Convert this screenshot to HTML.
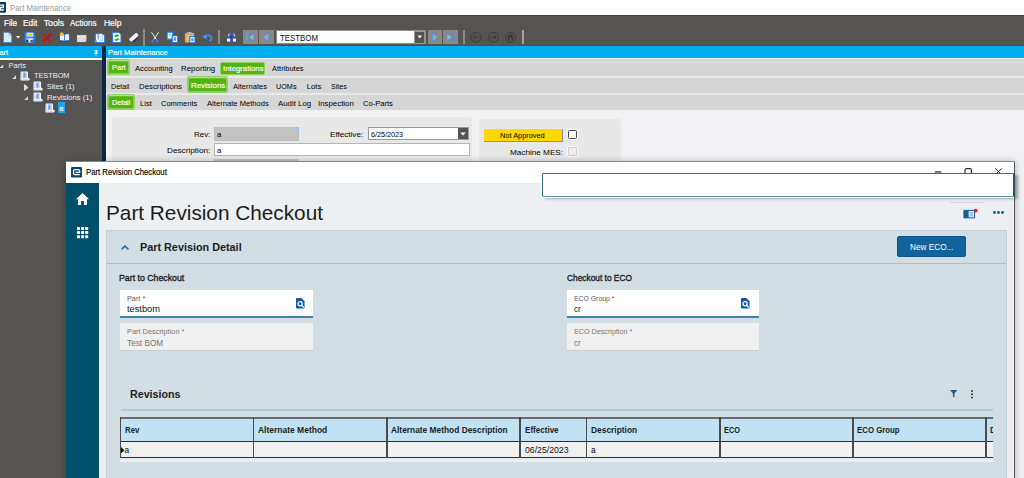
<!DOCTYPE html>
<html><head><meta charset="utf-8">
<style>
*{box-sizing:border-box;margin:0;padding:0}
html,body{width:1024px;height:478px;overflow:hidden;background:#f2f2f4;font-family:"Liberation Sans",sans-serif}
#root{position:relative;width:1024px;height:478px;overflow:hidden}
.a{position:absolute}
.t{position:absolute;white-space:nowrap;line-height:1}
svg{position:absolute;overflow:visible}
.gt{position:absolute;background:#52b414;border:1px solid #93d168;border-radius:2.2px;box-shadow:inset 0 0 0 .5px #bfe6a2,inset 0 1.2px 0 0 #a6da80}
.nb{position:absolute;background:#8b8987;top:30px;height:14.4px}
.sep{position:absolute;background:#8d8b89;width:2.2px;top:30px;height:14px}
.fld{position:absolute;height:27.5px;width:193px}
</style></head><body><div id="root">

<!-- ===== main window chrome ===== -->
<div class="a" style="left:0;top:0;width:1024px;height:15px;background:#fff"></div>
<svg style="left:0;top:2px" width="7" height="11" viewBox="0 0 7 11"><rect x="-5" y="0" width="11" height="10.8" rx="1" fill="#0b3c5d"/><path d="M-2 3.1H3.4V5.5H-2M0.3 5.5V8H3.8" stroke="#fff" stroke-width="1.3" fill="none"/></svg>
<div class="a" style="left:0;top:15px;width:1024px;height:31px;background:#565452"></div>
<div class="a" style="left:0;top:15px;width:1024px;height:1px;background:#424140"></div>
<div class="a" style="left:0;top:45px;width:1024px;height:1px;background:#5a4d49"></div>

<div class="nb" style="left:242.9px;width:14.9px"></div>
<div class="nb" style="left:259px;width:14.8px"></div>
<div class="nb" style="left:427.5px;width:14.4px"></div>
<div class="nb" style="left:443.4px;width:14.6px"></div>
<div class="sep" style="left:143px;top:28.5px;height:17px"></div>
<div class="sep" style="left:218.2px;top:29.8px;height:14.4px"></div>
<div class="sep" style="left:462.8px"></div>
<div class="sep" style="left:522px;background:#a3a1a0"></div>
<div class="a" style="left:275.9px;top:30px;width:150px;height:14.3px;background:#fff;border:1px solid #8e8c8a"></div>
<div class="a" style="left:414px;top:30.7px;width:11.3px;height:13.1px;background:#555352;border:1px solid #9a9896"></div>
<svg style="left:0;top:26px" width="530" height="22" viewBox="0 26 530 22">
<!-- new doc -->
<path d="M3.4 32.2H9.2L11.8 34.8V42.6H3.4Z" fill="#d9ecfb" stroke="#2a7fe0" stroke-width="0.9"/><path d="M9.2 32.2V34.8H11.8Z" fill="#fff" stroke="#3b4a60" stroke-width=".5"/>
<path d="M16 36H20.2L18.1 38.4Z" fill="#fff"/>
<!-- save -->
<rect x="24.6" y="32.2" width="10.6" height="10.6" rx=".8" fill="#2f8df2" stroke="#1f5fc0" stroke-width=".7"/>
<rect x="26.6" y="32.6" width="6.6" height="4" fill="#c7e2fb"/><rect x="27.2" y="33.4" width="5.4" height="2.4" fill="#f3cf2c"/>
<rect x="26.4" y="38.4" width="7" height="4.2" fill="#e8f1fb"/><rect x="26.2" y="39.6" width="2.2" height="3" fill="#11308a"/><rect x="30.4" y="40" width="1.8" height="2.6" fill="#555"/><rect x="32.4" y="39.6" width="1.4" height="3" fill="#11308a"/>
<!-- delete X -->
<path d="M43 34.4L51.2 42" stroke="#f00000" stroke-width="1.5"/><path d="M51.3 33.5L42.9 42.2" stroke="#f00000" stroke-width="2"/>
<!-- book -->
<path d="M59.4 34.2Q62 32.6 64.5 34.2Q67 32.6 69.7 34.2V41.6Q67 40.4 64.5 41.8Q62 40.4 59.4 41.6Z" fill="#e9f3fc" stroke="#1c62c4" stroke-width="1.1"/>
<path d="M64.5 34.2V41.6" stroke="#1c62c4" stroke-width=".8"/><path d="M59.2 40.6Q62 39.6 64.5 41Q67 39.6 69.8 40.6V42.2Q67 41 64.5 42.4Q62 41 59.2 42.2Z" fill="#1552b8"/>
<circle cx="61.8" cy="34.2" r="1.9" fill="#f8b40e"/><circle cx="61.4" cy="33.8" r=".8" fill="#fde37a"/>
<!-- gray note -->
<path d="M76.6 34.8H86.8V40.8L85 42.6H76.6Z" fill="#dcdcdc" stroke="#454342" stroke-width=".7"/><path d="M77.2 35.4H86.2V37.4H77.2Z" fill="#ebebeb"/>
<!-- attach doc -->
<path d="M95 33.6H101.8L104.6 35.6V42.6H95Z" fill="#fff" stroke="#2a78d6" stroke-width="1"/><path d="M98.2 39.6V34Q98.2 32.4 96.9 32.4Q95.6 32.4 95.6 34V40Q95.6 41.4 96.9 41.4" stroke="#3457b8" stroke-width=".8" fill="none"/><path d="M99.6 36H102.6V41H99.6" stroke="#9dbce8" stroke-width=".7" fill="#e6eefb"/>
<!-- refresh -->
<path d="M112.5 32.4H118.8L121 34.4V42.6H112.5Z" fill="#f2f8fd" stroke="#2a78d6" stroke-width="1"/>
<path d="M114.4 37Q114.6 34.6 117 34.8L116.8 33.8L119.2 35.6L116.8 37V36.2Q115.8 36.2 115.8 37Z" fill="#23a018"/>
<path d="M119.2 38.2Q119 40.8 116.6 40.6L116.8 41.6L114.4 39.8L116.8 38.4V39.2Q117.8 39.2 117.8 38.2Z" fill="#23a018"/>
<!-- eraser -->
<path d="M129.5 38.2L135.4 33Q136.4 32.2 137.4 33.2L138.4 34.6Q139 35.6 138 36.4L132.2 41.4Q131.2 42.2 130.2 41.2L129.2 39.8Q128.6 39 129.5 38.2Z" fill="#f4f4f8" stroke="#43425a" stroke-width=".5"/><path d="M132.6 41.8L138.4 36.8L138.7 37.5L134.4 41.9Z" fill="#28286a"/>
<!-- scissors -->
<path d="M151.5 32.3L156.2 39.4M158.5 32.3L153.8 39.4" stroke="#f4f4f4" stroke-width="0.95"/>
<circle cx="152.7" cy="41.2" r="1.5" fill="#2f7fe6"/><circle cx="157.3" cy="41.2" r="1.5" fill="#2f7fe6"/><circle cx="152.7" cy="41.2" r=".45" fill="#565452"/><circle cx="157.3" cy="41.2" r=".45" fill="#565452"/>
<!-- copy -->
<rect x="167.2" y="32.3" width="5.6" height="6.8" fill="#fff" stroke="#1e8cf4" stroke-width="1.1"/><rect x="168.6" y="33.6" width="2" height="2.6" fill="#8fc0f4"/>
<rect x="172.2" y="35.6" width="5.6" height="7" fill="#fff" stroke="#1a74dc" stroke-width="1.2"/><rect x="173.6" y="37.2" width="2.6" height="3.6" fill="#5a98e6"/>
<!-- paste -->
<rect x="185" y="33" width="9" height="9.6" rx=".8" fill="#e6ad72" stroke="#b8773a" stroke-width=".6"/><rect x="187.4" y="32" width="4.2" height="2" rx=".6" fill="#c9c9c9" stroke="#777" stroke-width=".4"/><path d="M186.4 35.6H190M186.4 37.4H190M186.4 39.2H189" stroke="#f4cfa2" stroke-width=".7"/>
<rect x="189.8" y="36.6" width="5.2" height="6.2" fill="#fff" stroke="#1a74dc" stroke-width="1.1"/><rect x="191.2" y="38.2" width="2.4" height="3" fill="#5a98e6"/>
<!-- undo -->
<path d="M205.4 37.2Q208.6 33.6 211 36.4Q212.6 38.8 209.6 41.4" stroke="#3b86ea" stroke-width="1.9" fill="none"/><path d="M202 36.2L206.8 34.2L206.4 39.4Z" fill="#4a94f2"/>
<!-- binoculars -->
<path d="M227.6 36L229 32.8H230.6L231 36V41.4Q231 42.2 230 42.2H227.4Q226.4 42.2 226.4 41.4V38.4Z" fill="#3c58b4"/><path d="M235.4 36L234 32.8H232.4L232 36V41.4Q232 42.2 233 42.2H235.6Q236.6 42.2 236.6 41.4V38.4Z" fill="#3c58b4"/>
<rect x="227" y="38.6" width="3.2" height="3" fill="#f2f6ff"/><rect x="233" y="38.6" width="3" height="3" fill="#f2f6ff"/><path d="M229.2 33.4L228.4 36.4M233.8 33.4L234.6 36.4" stroke="#dfe8ff" stroke-width=".9"/><rect x="230.4" y="36.4" width="2.2" height="1.6" fill="#1a2a80"/>
<!-- nav first / prev / next / last -->
<rect x="246" y="33.2" width="2.2" height="8" fill="#5fa3dd"/><path d="M254 33L248.8 37.2L254 41.4Z" fill="#8ab6dc" stroke="#4a7fd0" stroke-width=".6"/>
<path d="M268.8 32.8L263 37.2L268.8 41.8Z" fill="#7fb0dc" stroke="#4a7fd0" stroke-width=".6"/>
<path d="M432.2 32.8L438 37.2L432.2 41.8Z" fill="#7fb0dc" stroke="#4a7fd0" stroke-width=".6"/>
<path d="M446.8 33L452 37.2L446.8 41.4Z" fill="#8ab6dc" stroke="#4a7fd0" stroke-width=".6"/><rect x="452.6" y="33.2" width="2.2" height="8" fill="#5f86dd"/>
<!-- combo arrow -->
<path d="M417.6 35.6H422L419.8 38.6Z" fill="#fff"/>
<!-- circles -->
<g stroke="#3b3938" fill="none" stroke-width=".9"><circle cx="476" cy="37.2" r="4.9"/><circle cx="493.4" cy="37.2" r="4.9"/><circle cx="510.5" cy="37.2" r="4.9"/>
<path d="M479 37.2H473.4M475.4 35.2L473.2 37.2L475.4 39.2" stroke-width="1"/><path d="M490.4 37.2H496M494 35.2L496.2 37.2L494 39.2" stroke-width="1"/></g>
<path d="M510.5 33.8L513.2 36V40H507.8V36Z" fill="#3b3938"/><rect x="509.8" y="37.6" width="1.4" height="2.4" fill="#565f66"/>
</svg>

<div class="a" style="left:0;top:46px;width:1024px;height:12px;background:#00adee"></div>
<!-- pin -->
<svg style="left:93px;top:50px" width="6" height="6" viewBox="0 0 6 6"><path d="M1.6 0.4H4.4M2.1 0.4V3.1M3.9 0.4V3.1M0.9 3.3H5.1M3 3.3V5.9" stroke="#fff" stroke-width="0.7" fill="none"/><rect x="3.2" y="0.6" width=".8" height="2.6" fill="#fff"/></svg>
<!-- left tree -->
<div class="a" style="left:0;top:58px;width:102.4px;height:420px;background:#565452"></div>
<div class="a" style="left:0;top:58px;width:102.4px;height:1.8px;background:#fff"></div>
<div class="a" style="left:102.4px;top:46px;width:3.6px;height:120px;background:#0a2744"></div>
<svg style="left:0;top:64px" width="3.4" height="4.2" viewBox="0 0 3.4 4.2"><path d="M3.2 0.4V4H-0.4Z" fill="#d9d9e2"/></svg><svg style="left:12px;top:74.6px" width="4.2" height="4.2" viewBox="0 0 4.2 4.2"><path d="M4 0.2V4H0.2Z" fill="#d9d9e2"/></svg><svg style="left:23.8px;top:83.6px" width="4.6" height="7" viewBox="0 0 4.6 7"><path d="M0.5 0.6L4 3.5L0.5 6.4Z" fill="#cfcfd6" stroke="#f4f4f8" stroke-width=".8"/></svg><svg style="left:24.2px;top:96.2px" width="4.2" height="4.2" viewBox="0 0 4.2 4.2"><path d="M4 0.2V4H0.2Z" fill="#d9d9e2"/></svg><svg style="left:20.0px;top:70.7px" width="10" height="10" viewBox="0 0 10 10"><path d="M0.6 1.2Q0.6 0.4 1.4 0.4H7.2Q8 0.4 8 1.2V6.4Q9.8 6.8 9.8 8.2Q9.8 9.6 8.2 9.6H1.6Q0.4 9.6 0.4 8.4Z" fill="#f3f6fb"/><rect x="2.8" y="1.2" width="3.8" height="6" fill="#a6c7ec"/><rect x="3.7" y="2.4" width="1.1" height="3.8" fill="#5d8ed2"/><path d="M1.4 1.6V7.6" stroke="#b8c6d8" stroke-width=".7"/><path d="M1.2 8.6H8.6" stroke="#c6d2e2" stroke-width=".8"/></svg><svg style="left:32.9px;top:81.4px" width="10" height="10" viewBox="0 0 10 10"><path d="M0.6 1.2Q0.6 0.4 1.4 0.4H7.2Q8 0.4 8 1.2V6.4Q9.8 6.8 9.8 8.2Q9.8 9.6 8.2 9.6H1.6Q0.4 9.6 0.4 8.4Z" fill="#f3f6fb"/><rect x="2.8" y="1.2" width="3.8" height="6" fill="#a6c7ec"/><rect x="3.7" y="2.4" width="1.1" height="3.8" fill="#5d8ed2"/><path d="M1.4 1.6V7.6" stroke="#b8c6d8" stroke-width=".7"/><path d="M1.2 8.6H8.6" stroke="#c6d2e2" stroke-width=".8"/></svg><svg style="left:32.9px;top:92.2px" width="10" height="10" viewBox="0 0 10 10"><path d="M0.6 1.2Q0.6 0.4 1.4 0.4H7.2Q8 0.4 8 1.2V6.4Q9.8 6.8 9.8 8.2Q9.8 9.6 8.2 9.6H1.6Q0.4 9.6 0.4 8.4Z" fill="#f3f6fb"/><rect x="2.8" y="1.2" width="3.8" height="6" fill="#a6c7ec"/><rect x="3.7" y="2.4" width="1.1" height="3.8" fill="#5d8ed2"/><path d="M1.4 1.6V7.6" stroke="#b8c6d8" stroke-width=".7"/><path d="M1.2 8.6H8.6" stroke="#c6d2e2" stroke-width=".8"/></svg><svg style="left:45.3px;top:102.8px" width="10" height="10" viewBox="0 0 10 10"><path d="M0.6 1.2Q0.6 0.4 1.4 0.4H7.2Q8 0.4 8 1.2V6.4Q9.8 6.8 9.8 8.2Q9.8 9.6 8.2 9.6H1.6Q0.4 9.6 0.4 8.4Z" fill="#f3f6fb"/><rect x="2.8" y="1.2" width="3.8" height="6" fill="#a6c7ec"/><rect x="3.7" y="2.4" width="1.1" height="3.8" fill="#5d8ed2"/><path d="M1.4 1.6V7.6" stroke="#b8c6d8" stroke-width=".7"/><path d="M1.2 8.6H8.6" stroke="#c6d2e2" stroke-width=".8"/></svg><div class="a" style="left:58px;top:102.4px;width:6.6px;height:10.4px;background:#1ea5ee"></div>
<!-- tabs -->
<div class="a" style="left:106px;top:58px;width:918px;height:52px;background:#d6d6d6"></div>
<div class="a" style="left:106px;top:58px;width:918px;height:1px;background:#f4f4f4"></div>
<div class="a" style="left:106px;top:75.6px;width:918px;height:2px;background:#e9e9e9"></div>
<div class="a" style="left:106px;top:92.6px;width:918px;height:2px;background:#e9e9e9"></div>
<div class="a" style="left:106px;top:110px;width:2px;height:60px;background:#f9f9fa"></div>
<div class="gt" style="left:107.3px;top:59.1px;width:22.3px;height:16px"></div>
<div class="gt" style="left:220.2px;top:61.5px;width:45.2px;height:13px;box-shadow:none;border-color:#8fd060"></div>
<div class="gt" style="left:186.9px;top:76px;width:41px;height:16.9px"></div>
<div class="gt" style="left:107.3px;top:93.6px;width:27.4px;height:16.3px"></div>
<!-- form groups -->
<div class="a" style="left:112px;top:117px;width:360.4px;height:50px;background:#e8e8e8;border-radius:3px 3px 0 0"></div>
<div class="a" style="left:479px;top:119px;width:142.2px;height:48px;background:#e8e8e8;border-radius:3px 3px 0 0"></div>
<div class="a" style="left:214px;top:127px;width:85px;height:13.6px;background:#c3c3c3;border:1px solid #bdbdbd"></div>
<svg style="left:293px;top:127px" width="6" height="6" viewBox="0 0 6 6"><path d="M0 0H6V6Z" fill="#9cc6ea"/></svg>
<div class="a" style="left:214px;top:143.2px;width:255.6px;height:13.2px;background:#fff;border:1px solid #b4b4b4"></div>
<div class="a" style="left:214px;top:158.8px;width:85px;height:8px;background:#c3c3c3"></div>
<div class="a" style="left:368px;top:127px;width:101px;height:12.8px;background:#fff;border:1px solid #9a9a9a"></div>
<div class="a" style="left:458px;top:127.6px;width:10.4px;height:11.6px;background:#555352"></div>
<svg style="left:460.4px;top:131.5px" width="6" height="4" viewBox="0 0 6 4"><path d="M0.3 0.5H5.7L3 3.6Z" fill="#fff"/></svg>
<div class="a" style="left:484px;top:129px;width:78.8px;height:12.9px;background:#ffd800;border-right:1px solid #8d8da3;border-bottom:1.4px solid #8d8da3"></div>
<div class="a" style="left:568.1px;top:130px;width:9.4px;height:8.8px;background:#fff;border:1.1px solid #4a4a4a;border-radius:1.5px;box-shadow:0 0 0 1px #f4f4f4"></div>
<div class="a" style="left:568.1px;top:147.1px;width:9.4px;height:8.6px;background:#ececec;border:1px solid #cfcfcf;border-radius:1px;box-shadow:0 0 0 1px #f6f6f6"></div>

<!-- ===== dialog ===== -->
<div class="a" style="left:66px;top:162.2px;width:949px;height:320px;background:#ecf0f3;box-shadow:0 0 7px 0 rgba(0,0,0,.3)"></div>
<div class="a" style="left:66px;top:161.2px;width:949px;height:1.3px;background:#858585"></div>
<div class="a" style="left:1014px;top:162px;width:1px;height:320px;background:#5a5a5a"></div>
<div class="a" style="left:66px;top:162.4px;width:948px;height:20.2px;background:#fff"></div>
<!-- dialog icon -->
<svg style="left:71px;top:166.7px" width="11" height="10.4" viewBox="0 0 11 10.4"><rect width="11" height="10.4" rx="1.2" fill="#0b4666"/><path d="M4.4 5.4H8.7V4.1Q8.7 2.7 7.3 2.7H3.9Q2.5 2.7 2.5 4.1V6.3Q2.5 7.7 3.9 7.7H8.8" stroke="#fff" stroke-width="1.2" fill="none"/></svg>
<!-- window buttons -->
<svg style="left:930px;top:164px" width="80" height="10" viewBox="0 0 80 10"><path d="M4.8 7.9H11.4" stroke="#3a3a3a" stroke-width="1.3"/><rect x="35" y="4.7" width="6.4" height="7" rx="1.3" fill="none" stroke="#333" stroke-width="1.2"/><path d="M65.2 4.3L71.8 10.9M71.8 4.3L65.2 10.9" stroke="#222" stroke-width="1"/></svg>
<!-- nav -->
<div class="a" style="left:66px;top:182.6px;width:32.8px;height:300px;background:#00506c"></div>
<div class="a" style="left:98.8px;top:182.6px;width:1.2px;height:300px;background:#f6f8fa"></div>
<svg style="left:76px;top:193px" width="13" height="12" viewBox="0 0 13 12"><path d="M6.5 0L13 6.2H11V12H7.9V8H5.1V12H2V6.2H0Z" fill="#fff"/></svg>
<svg style="left:77px;top:227px" width="11.2" height="11.2" viewBox="0 0 11.2 11.2" fill="#fff"><rect x="0" y="0" width="3" height="3" rx=".4"/><rect x="4.1" y="0" width="3" height="3" rx=".4"/><rect x="8.2" y="0" width="3" height="3" rx=".4"/><rect x="0" y="4.1" width="3" height="3" rx=".4"/><rect x="4.1" y="4.1" width="3" height="3" rx=".4"/><rect x="8.2" y="4.1" width="3" height="3" rx=".4"/><rect x="0" y="8.2" width="3" height="3" rx=".4"/><rect x="4.1" y="8.2" width="3" height="3" rx=".4"/><rect x="8.2" y="8.2" width="3" height="3" rx=".4"/></svg>
<!-- tooltip box -->
<div class="a" style="left:542.3px;top:173px;width:472.7px;height:24px;background:#fff;border:1.2px solid #33727e;border-bottom:1.9px solid #6199a1;border-right:2px solid #28525d;border-radius:1.5px 0 0 1.5px;box-shadow:-1px 1px 0 0 #fff,3px 2px 3px rgba(0,0,0,.28)"></div>
<!-- top-right icons -->
<div class="a" style="left:949.6px;top:202px;width:34px;height:1px;background:#d2d4d6"></div>
<svg style="left:963.4px;top:209px" width="15" height="10" viewBox="0 0 15 10"><rect x="0" y="0.6" width="12.4" height="9.2" rx="1" fill="#155f9b" stroke="#fff" stroke-width=".7"/><rect x="5.6" y="2" width="5.4" height="6.4" fill="#dfe9f2"/><path d="M6.6 3.6H10M6.6 5.2H10M6.6 6.8H10" stroke="#6d8fb0" stroke-width=".6"/><circle cx="12.7" cy="1.6" r="1.9" fill="#f01818"/></svg>
<svg style="left:992.8px;top:211.4px" width="11" height="3" viewBox="0 0 11 3" fill="#0f5aa5"><circle cx="1.5" cy="1.5" r="1.45"/><circle cx="5.5" cy="1.5" r="1.45"/><circle cx="9.5" cy="1.5" r="1.45"/></svg>
<!-- panel -->
<div class="a" style="left:106px;top:230px;width:901px;height:260px;background:#d2dee3;border:1px solid #c2d2d8"></div>
<div class="a" style="left:107px;top:263px;width:899px;height:1px;background:#9fc4d2"></div>
<svg style="left:121.2px;top:245.4px" width="8" height="5" viewBox="0 0 8 5"><path d="M0.6 4.4L4 1L7.4 4.4" stroke="#1a689d" stroke-width="1.5" fill="none"/></svg>
<div class="a" style="left:897px;top:236px;width:69px;height:20.6px;background:#12639b;border-radius:2px;border:1px solid #0e5688"></div>
<!-- fields -->
<div class="fld" style="left:120px;top:290px;background:#fff;border-bottom:2px solid #3d86b4"></div>
<div class="fld" style="left:120px;top:323.3px;background:#f0f0f0;border-bottom:1.2px solid #c4d0d6"></div>
<div class="fld" style="left:566.5px;top:290px;width:192px;background:#fff;border-bottom:2px solid #3d86b4"></div>
<div class="fld" style="left:566.5px;top:323.3px;width:192px;background:#f0f0f0;border-bottom:1.2px solid #c4d0d6"></div>
<svg style="left:295.7px;top:297.9px" width="8.5" height="10.4" viewBox="0 0 8.5 10.4"><path d="M0 0.8Q0 0 .8 0H5.3L8.5 3.2V9.6Q8.5 10.4 7.7 10.4H.8Q0 10.4 0 9.6Z" fill="#0e58a4"/><circle cx="4.1" cy="5.7" r="2.1" fill="none" stroke="#fff" stroke-width="1.25"/><path d="M5.8 7.5L7.7 9.5" stroke="#fff" stroke-width="1.2"/></svg>
<svg style="left:741px;top:297.9px" width="8.5" height="10.4" viewBox="0 0 8.5 10.4"><path d="M0 0.8Q0 0 .8 0H5.3L8.5 3.2V9.6Q8.5 10.4 7.7 10.4H.8Q0 10.4 0 9.6Z" fill="#0e58a4"/><circle cx="4.1" cy="5.7" r="2.1" fill="none" stroke="#fff" stroke-width="1.25"/><path d="M5.8 7.5L7.7 9.5" stroke="#fff" stroke-width="1.2"/></svg>
<!-- revisions grid -->
<svg style="left:950px;top:390px" width="7.4" height="7.6" viewBox="0 0 7.4 7.6"><path d="M0 0H7.4L4.5 3.6V7.6L2.9 6.4V3.6Z" fill="#17609a"/></svg>
<svg style="left:971px;top:390.4px" width="2" height="8.6" viewBox="0 0 2 8.6" fill="#222"><circle cx="1" cy="1" r=".95"/><circle cx="1" cy="4.3" r=".95"/><circle cx="1" cy="7.6" r=".95"/></svg>
<div class="a" style="left:121px;top:409.2px;width:871.5px;height:1.9px;background:#abccd8"></div>
<div class="a" style="left:120px;top:417px;width:872.5px;height:44.5px;background:#e9eef0;overflow:hidden"><div class="a" style="left:0;top:0.4px;width:880px;height:24.6px;background:#c1e2f5"></div><div class="a" style="left:0;top:25px;width:880px;height:16px;background:#f0f0f0"></div><div class="a" style="left:0;top:0.2px;width:880px;height:1.5px;background:#6a6a6a"></div><div class="a" style="left:0;top:23.8px;width:880px;height:1.4px;background:#2e2e2e"></div><div class="a" style="left:0;top:40.0px;width:880px;height:1.3px;background:#2e2e2e"></div><div class="a" style="left:-0.40px;top:0.4px;width:1.8px;height:40.8px;background:#4a4a4a"></div><div class="a" style="left:132.60px;top:0.4px;width:1.8px;height:40.8px;background:#4a4a4a"></div><div class="a" style="left:265.85px;top:0.4px;width:1.8px;height:40.8px;background:#4a4a4a"></div><div class="a" style="left:399.35px;top:0.4px;width:1.8px;height:40.8px;background:#4a4a4a"></div><div class="a" style="left:465.60px;top:0.4px;width:1.8px;height:40.8px;background:#4a4a4a"></div><div class="a" style="left:599.10px;top:0.4px;width:1.8px;height:40.8px;background:#4a4a4a"></div><div class="a" style="left:732.10px;top:0.4px;width:1.8px;height:40.8px;background:#4a4a4a"></div><div class="a" style="left:865.35px;top:0.4px;width:1.8px;height:40.8px;background:#4a4a4a"></div><svg style="left:1.2px;top:29.6px" width="3.4" height="6.6" viewBox="0 0 3.4 6.6"><path d="M0 0L3.4 3.3L0 6.6Z" fill="#111"/></svg><div class="t" style="left:870px;top:8.97px;font-size:8.3px;font-weight:700;color:#1c1c1c">D</div></div>
<div class="t" style="left:9.90px;top:4.00px;font-size:8.80px;font-weight:400;color:#9a9a9a;transform:scaleX(0.8870);transform-origin:0 0;">Part Maintenance</div>
<div class="t" style="left:3.75px;top:19.00px;font-size:8.70px;font-weight:400;color:#fff;transform:scaleX(0.9393);transform-origin:0 0;-webkit-text-stroke:0.18px #fff;">File</div>
<div class="t" style="left:23.10px;top:19.00px;font-size:8.70px;font-weight:400;color:#fff;transform:scaleX(0.9600);transform-origin:0 0;-webkit-text-stroke:0.18px #fff;">Edit</div>
<div class="t" style="left:43.75px;top:19.00px;font-size:8.70px;font-weight:400;color:#fff;transform:scaleX(1.0000);transform-origin:0 0;-webkit-text-stroke:0.18px #fff;">Tools</div>
<div class="t" style="left:70.00px;top:19.00px;font-size:8.70px;font-weight:400;color:#fff;transform:scaleX(0.9276);transform-origin:0 0;-webkit-text-stroke:0.18px #fff;">Actions</div>
<div class="t" style="left:103.50px;top:19.00px;font-size:8.70px;font-weight:400;color:#fff;transform:scaleX(0.9722);transform-origin:0 0;-webkit-text-stroke:0.18px #fff;">Help</div>
<div class="t" style="left:-5.60px;top:49.00px;font-size:7.50px;font-weight:400;color:#fff;transform:scaleX(1.0286);transform-origin:0 0;-webkit-text-stroke:0.15px #fff;">Part</div>
<div class="t" style="left:107.50px;top:49.00px;font-size:7.50px;font-weight:400;color:#fff;transform:scaleX(1.0172);transform-origin:0 0;-webkit-text-stroke:0.15px #fff;">Part Maintenance</div>
<div class="t" style="left:279.70px;top:34.00px;font-size:8.60px;font-weight:400;color:#111;transform:scaleX(0.9146);transform-origin:0 0;">TESTBOM</div>
<div class="t" style="left:8.50px;top:62.00px;font-size:7.50px;font-weight:400;color:#ececfa;transform:scaleX(1.0000);transform-origin:0 0;">Parts</div>
<div class="t" style="left:34.10px;top:72.00px;font-size:7.50px;font-weight:400;color:#ececfa;transform:scaleX(0.9778);transform-origin:0 0;">TESTBOM</div>
<div class="t" style="left:46.70px;top:83.00px;font-size:7.50px;font-weight:400;color:#ececfa;transform:scaleX(1.0000);transform-origin:0 0;">Sites (1)</div>
<div class="t" style="left:46.70px;top:94.00px;font-size:7.50px;font-weight:400;color:#ececfa;transform:scaleX(1.0341);transform-origin:0 0;">Revisions (1)</div>
<div class="t" style="left:59.30px;top:105.00px;font-size:7.50px;font-weight:400;color:#fff;transform:scaleX(1.0000);transform-origin:0 0;-webkit-text-stroke:0.15px #fff;">a</div>
<div class="t" style="left:111.90px;top:64.00px;font-size:7.70px;font-weight:400;color:#fff;transform:scaleX(0.9714);transform-origin:0 0;-webkit-text-stroke:0.15px #fff;">Part</div>
<div class="t" style="left:134.50px;top:65.00px;font-size:7.70px;font-weight:400;color:#000;transform:scaleX(0.9895);transform-origin:0 0;">Accounting</div>
<div class="t" style="left:180.90px;top:65.00px;font-size:7.70px;font-weight:400;color:#000;transform:scaleX(1.0273);transform-origin:0 0;">Reporting</div>
<div class="t" style="left:222.70px;top:65.00px;font-size:7.70px;font-weight:400;color:#fff;transform:scaleX(1.0100);transform-origin:0 0;-webkit-text-stroke:0.15px #fff;">Integrations</div>
<div class="t" style="left:271.90px;top:65.00px;font-size:7.70px;font-weight:400;color:#000;transform:scaleX(0.9719);transform-origin:0 0;">Attributes</div>
<div class="t" style="left:111.30px;top:83.00px;font-size:7.70px;font-weight:400;color:#000;transform:scaleX(0.9400);transform-origin:0 0;">Detail</div>
<div class="t" style="left:139.10px;top:83.00px;font-size:7.70px;font-weight:400;color:#000;transform:scaleX(1.0167);transform-origin:0 0;">Descriptions</div>
<div class="t" style="left:190.60px;top:82.00px;font-size:7.70px;font-weight:400;color:#fff;transform:scaleX(1.0273);transform-origin:0 0;-webkit-text-stroke:0.15px #fff;">Revisions</div>
<div class="t" style="left:232.80px;top:83.00px;font-size:7.70px;font-weight:400;color:#000;transform:scaleX(0.9853);transform-origin:0 0;">Alternates</div>
<div class="t" style="left:276.30px;top:83.00px;font-size:7.70px;font-weight:400;color:#000;transform:scaleX(0.9409);transform-origin:0 0;">UOMs</div>
<div class="t" style="left:306.80px;top:83.00px;font-size:7.70px;font-weight:400;color:#000;transform:scaleX(1.0000);transform-origin:0 0;">Lots</div>
<div class="t" style="left:330.90px;top:83.00px;font-size:7.70px;font-weight:400;color:#000;transform:scaleX(0.9235);transform-origin:0 0;">Sites</div>
<div class="t" style="left:111.50px;top:99.00px;font-size:7.70px;font-weight:400;color:#fff;transform:scaleX(0.9300);transform-origin:0 0;-webkit-text-stroke:0.15px #fff;">Detail</div>
<div class="t" style="left:139.90px;top:100.00px;font-size:7.70px;font-weight:400;color:#000;transform:scaleX(0.9833);transform-origin:0 0;">List</div>
<div class="t" style="left:161.10px;top:100.00px;font-size:7.70px;font-weight:400;color:#000;transform:scaleX(0.9757);transform-origin:0 0;">Comments</div>
<div class="t" style="left:206.90px;top:100.00px;font-size:7.70px;font-weight:400;color:#000;transform:scaleX(0.9919);transform-origin:0 0;">Alternate Methods</div>
<div class="t" style="left:277.60px;top:100.00px;font-size:7.70px;font-weight:400;color:#000;transform:scaleX(1.0188);transform-origin:0 0;">Audit Log</div>
<div class="t" style="left:318.30px;top:100.00px;font-size:7.70px;font-weight:400;color:#000;transform:scaleX(1.0229);transform-origin:0 0;">Inspection</div>
<div class="t" style="left:363.00px;top:100.00px;font-size:7.70px;font-weight:400;color:#000;transform:scaleX(0.9833);transform-origin:0 0;">Co-Parts</div>
<div class="t" style="left:193.80px;top:131.00px;font-size:8.10px;font-weight:400;color:#000;transform:scaleX(0.9812);transform-origin:0 0;">Rev:</div>
<div class="t" style="left:166.90px;top:147.00px;font-size:8.10px;font-weight:400;color:#000;transform:scaleX(1.0143);transform-origin:0 0;">Description:</div>
<div class="t" style="left:330.00px;top:131.00px;font-size:8.10px;font-weight:400;color:#000;transform:scaleX(1.0000);transform-origin:0 0;">Effective:</div>
<div class="t" style="left:217.00px;top:131.00px;font-size:7.80px;font-weight:400;color:#000;transform:scaleX(1.0000);transform-origin:0 0;">a</div>
<div class="t" style="left:217.00px;top:147.00px;font-size:7.80px;font-weight:400;color:#000;transform:scaleX(1.0000);transform-origin:0 0;">a</div>
<div class="t" style="left:370.50px;top:131.00px;font-size:7.60px;font-weight:400;color:#000;transform:scaleX(0.9500);transform-origin:0 0;">6/25/2023</div>
<div class="t" style="left:500.00px;top:132.00px;font-size:7.30px;font-weight:400;color:#000;transform:scaleX(1.0114);transform-origin:0 0;">Not Approved</div>
<div class="t" style="left:509.80px;top:149.00px;font-size:8.00px;font-weight:400;color:#000;transform:scaleX(1.0196);transform-origin:0 0;">Machine MES:</div>
<div class="t" style="left:85.50px;top:168.00px;font-size:8.60px;font-weight:400;color:#000;transform:scaleX(0.9000);transform-origin:0 0;-webkit-text-stroke:0.15px #000;">Part Revision Checkout</div>
<div class="t" style="left:105.98px;top:203.00px;font-size:20.30px;font-weight:400;color:#1c1c1c;transform:scaleX(1.0237);transform-origin:0 0;">Part Revision Checkout</div>
<div class="t" style="left:139.80px;top:242.00px;font-size:11.40px;font-weight:700;color:#1c1c1c;transform:scaleX(0.9500);transform-origin:0 0;">Part Revision Detail</div>
<div class="t" style="left:909.79px;top:243.00px;font-size:9.00px;font-weight:400;color:#fff;transform:scaleX(0.9130);transform-origin:0 0;">New ECO...</div>
<div class="t" style="left:119.07px;top:273.00px;font-size:9.40px;font-weight:400;color:#1c1c1c;transform:scaleX(0.9348);transform-origin:0 0;-webkit-text-stroke:0.35px #1c1c1c;">Part to Checkout</div>
<div class="t" style="left:566.50px;top:273.00px;font-size:9.40px;font-weight:400;color:#1c1c1c;transform:scaleX(0.8904);transform-origin:0 0;-webkit-text-stroke:0.35px #1c1c1c;">Checkout to ECO</div>
<div class="t" style="left:126.75px;top:295.00px;font-size:7.80px;font-weight:400;color:#5a5a5a;transform:scaleX(0.9342);transform-origin:0 0;">Part *</div>
<div class="t" style="left:126.75px;top:305.00px;font-size:9.20px;font-weight:400;color:#111;transform:scaleX(1.0078);transform-origin:0 0;">testbom</div>
<div class="t" style="left:126.75px;top:328.00px;font-size:7.80px;font-weight:400;color:#777;transform:scaleX(0.9467);transform-origin:0 0;">Part Description *</div>
<div class="t" style="left:126.75px;top:339.00px;font-size:9.00px;font-weight:400;color:#777;transform:scaleX(0.9167);transform-origin:0 0;">Test BOM</div>
<div class="t" style="left:573.50px;top:295.00px;font-size:7.80px;font-weight:400;color:#5a5a5a;transform:scaleX(0.8804);transform-origin:0 0;">ECO Group *</div>
<div class="t" style="left:573.50px;top:305.00px;font-size:9.20px;font-weight:400;color:#111;transform:scaleX(0.8750);transform-origin:0 0;">cr</div>
<div class="t" style="left:573.50px;top:328.00px;font-size:7.80px;font-weight:400;color:#777;transform:scaleX(0.9206);transform-origin:0 0;">ECO Description *</div>
<div class="t" style="left:573.50px;top:339.00px;font-size:9.20px;font-weight:400;color:#777;transform:scaleX(0.8750);transform-origin:0 0;">cr</div>
<div class="t" style="left:130.33px;top:388.00px;font-size:11.60px;font-weight:700;color:#1c1c1c;transform:scaleX(0.9198);transform-origin:0 0;">Revisions</div>
<div class="t" style="left:124.50px;top:426.00px;font-size:8.30px;font-weight:700;color:#1c1c1c;transform:scaleX(0.9500);transform-origin:0 0;">Rev</div>
<div class="t" style="left:257.50px;top:426.00px;font-size:8.30px;font-weight:700;color:#1c1c1c;transform:scaleX(1.0221);transform-origin:0 0;">Alternate Method</div>
<div class="t" style="left:391.00px;top:426.00px;font-size:8.30px;font-weight:700;color:#1c1c1c;transform:scaleX(1.0086);transform-origin:0 0;">Alternate Method Description</div>
<div class="t" style="left:524.50px;top:426.00px;font-size:8.30px;font-weight:700;color:#1c1c1c;transform:scaleX(0.9714);transform-origin:0 0;">Effective</div>
<div class="t" style="left:591.00px;top:426.00px;font-size:8.30px;font-weight:700;color:#1c1c1c;transform:scaleX(1.0111);transform-origin:0 0;">Description</div>
<div class="t" style="left:724.00px;top:426.00px;font-size:8.30px;font-weight:700;color:#1c1c1c;transform:scaleX(0.8889);transform-origin:0 0;">ECO</div>
<div class="t" style="left:857.25px;top:426.00px;font-size:8.30px;font-weight:700;color:#1c1c1c;transform:scaleX(0.9444);transform-origin:0 0;">ECO Group</div>
<div class="t" style="left:124.50px;top:446.00px;font-size:8.30px;font-weight:400;color:#000;transform:scaleX(1.0000);transform-origin:0 0;">a</div>
<div class="t" style="left:524.50px;top:446.00px;font-size:8.30px;font-weight:400;color:#111;transform:scaleX(1.0488);transform-origin:0 0;">06/25/2023</div>
<div class="t" style="left:591.00px;top:446.00px;font-size:8.30px;font-weight:400;color:#000;transform:scaleX(1.0000);transform-origin:0 0;">a</div>
</div></body></html>
